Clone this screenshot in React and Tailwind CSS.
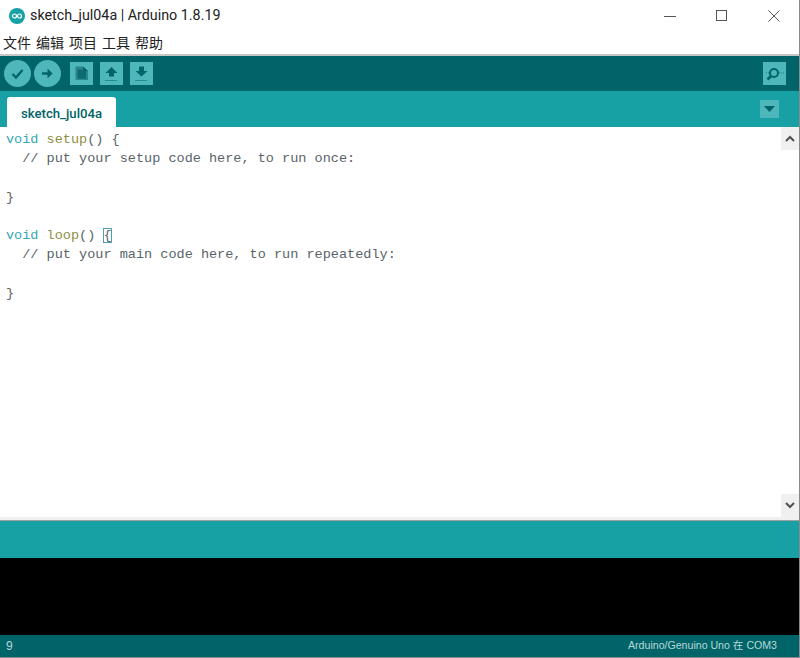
function RoundButton({ children }) {
  return (
    <div className="w-[27px] h-[27px] rounded-full bg-[#4db7bb] flex items-center justify-center">
      <svg width="27" height="27" viewBox="0 0 27 27" fill="none" stroke="#006468">
        {children}
      </svg>
    </div>
  );
}

function SquareButton({ children, className = "" }) {
  return (
    <div className={`w-[23px] h-[23px] bg-[#4db7bb] ${className}`}>
      <svg width="23" height="23" viewBox="0 0 23 23">
        {children}
      </svg>
    </div>
  );
}

export default function App() {
  return (
    <div className="w-[800px] h-[658px] flex flex-col bg-white overflow-hidden border-r border-[#8a8a8a] font-['Liberation_Sans',sans-serif]">
      {/* Title bar */}
      <div className="h-[31px] flex items-center shrink-0">
        <svg className="ml-[9px]" width="16" height="16" viewBox="0 0 16 16" fill="none">
          <circle cx="8" cy="8" r="8" fill="#17a1a5" />
          <circle cx="5.5" cy="8" r="2" stroke="#fff" strokeWidth="1.2" />
          <circle cx="10.5" cy="8" r="2" stroke="#fff" strokeWidth="1.2" />
        </svg>
        <span className="ml-[5px] text-[14.3px] text-[#222] font-['Roboto',sans-serif]">
          sketch_jul04a | Arduino 1.8.19
        </span>
        <div className="ml-auto mr-[19px] flex items-center gap-[40px] text-[#555]">
          <svg width="12" height="12" viewBox="0 0 12 12" stroke="currentColor" strokeWidth="1">
            <path d="M0 6.5 H12" />
          </svg>
          <svg width="11" height="11" viewBox="0 0 11 11" fill="none" stroke="currentColor" strokeWidth="1">
            <rect x="0.5" y="0.5" width="10" height="10" />
          </svg>
          <svg className="ml-[1px]" width="12" height="12" viewBox="0 0 12 12" stroke="currentColor" strokeWidth="1">
            <path d="M0.5 0.5 L11.5 11.5 M11.5 0.5 L0.5 11.5" />
          </svg>
        </div>
      </div>

      {/* Menu bar */}
      <div className="h-[23px] flex items-center gap-[5px] pl-[3px] shrink-0 text-[14px] text-[#222] font-['Noto_Sans_CJK_SC',sans-serif]">
        <span>文件</span>
        <span>编辑</span>
        <span>项目</span>
        <span>工具</span>
        <span>帮助</span>
      </div>

      {/* Toolbar */}
      <div className="h-[37px] shrink-0 border-t-2 border-[#c8c8c8] bg-[#006468] flex items-center">
        <div className="flex items-center gap-[3px] ml-[4px]">
          <RoundButton>
            <path d="M8.5 14 L12 17.5 L18.5 10" strokeWidth="2.4" />
          </RoundButton>
          <RoundButton>
            <path d="M8 13.5 H16" strokeWidth="2.4" />
            <path d="M14 9.5 L18 13.5 L14 17.5 Z" fill="#006468" strokeWidth="1" />
          </RoundButton>
        </div>
        <div className="flex items-center gap-[7px] ml-[9px]">
          <SquareButton>
            <path d="M5.5 4.5 H13 L18 9 V18 H5.5 Z" fill="#2b8589" />
            <path d="M13 4.5 L18 9 H13 Z" fill="#006468" />
            <path d="M7.5 9 H16 M7.5 11 H16 M7.5 13 H16 M7.5 15 H16 M9 7 V17 M11 7 V17 M13 9 V17 M15 9 V17" stroke="#006468" strokeWidth="1" />
          </SquareButton>
          <SquareButton>
            <path d="M11.5 5 L17.5 11 H14 V14.5 H9 V11 H5.5 Z" fill="#006468" />
            <path d="M5.5 18.5 H17.5" stroke="#006468" strokeWidth="1" strokeDasharray="1 1" />
          </SquareButton>
          <SquareButton>
            <path d="M9 4.5 H14 V9 H17.5 L11.5 14.5 L5.5 9 H9 Z" fill="#006468" />
            <path d="M5.5 18.5 H17.5" stroke="#006468" strokeWidth="1" strokeDasharray="1 1" />
          </SquareButton>
        </div>
        <SquareButton className="ml-auto mr-[13px]">
          <circle cx="11" cy="11" r="4" fill="none" stroke="#006468" strokeWidth="2" />
          <path d="M8 14 L4.5 17.5" stroke="#006468" strokeWidth="2.6" />
          <path d="M3 11 H6 M16 11 H21" stroke="#006468" strokeWidth="0.7" strokeDasharray="1 1" />
        </SquareButton>
      </div>

      {/* Tab strip */}
      <div className="h-[36px] shrink-0 bg-[#17a1a5] flex items-end">
        <div className="ml-[7px] w-[109px] h-[30px] pt-[4px] bg-white rounded-t-[3px] flex items-center justify-center text-[13.2px] font-['Roboto',sans-serif] font-medium text-[#006468]">
          sketch_jul04a
        </div>
        <div className="ml-auto mr-[20px] mb-[9px] w-[19px] h-[18px] bg-[#4db7bb] flex items-center justify-center">
          <svg width="11" height="6" viewBox="0 0 11 6">
            <path d="M0 0 H11 L5.5 6 Z" fill="#006468" />
          </svg>
        </div>
      </div>

      {/* Editor */}
      <div className="h-[390px] shrink-0 flex">
        <pre className="flex-1 pt-[3px] pl-[6px] font-['Liberation_Mono',monospace] text-[13.54px] leading-[19.2px] text-[#59646a]">
          <span className="text-[#33a9ad]">void</span> <span className="text-[#8f8f45]">setup</span>() {"{\n"}
          {"  // put your setup code here, to run once:\n\n}\n\n"}
          <span className="text-[#33a9ad]">void</span> <span className="text-[#8f8f45]">loop</span>(){" "}
          <span className="outline outline-1 -outline-offset-1 outline-[#4f9fb0]">{"{"}</span>
          {"\n  // put your main code here, to run repeatedly:\n\n}"}
        </pre>
        <div className="w-[18px] bg-white flex flex-col justify-between">
          <div className="h-[23px] bg-[#f0f0f0] flex items-center justify-center">
            <svg width="10" height="7" viewBox="0 0 10 7" fill="none" stroke="#505050" strokeWidth="2">
              <path d="M1 6 L5 2 L9 6" />
            </svg>
          </div>
          <div className="h-[23px] bg-[#f0f0f0] flex items-center justify-center">
            <svg width="10" height="7" viewBox="0 0 10 7" fill="none" stroke="#505050" strokeWidth="2">
              <path d="M1 1 L5 5 L9 1" />
            </svg>
          </div>
        </div>
      </div>

      {/* Divider and message area */}
      <div className="h-[4px] shrink-0 bg-[#f0f0f0] border-b border-[#a0a0a0]" />
      <div className="h-[37px] shrink-0 bg-[#17a1a5]" />
      <div className="h-[77px] shrink-0 bg-black" />

      {/* Status bar */}
      <div className="h-[22px] shrink-0 bg-[#006468] flex items-center justify-between pl-[6px] pr-[22px] text-[10.6px] text-[#b8d8d8] font-['Liberation_Sans','Noto_Sans_CJK_SC',sans-serif]">
        <span className="text-[12px]">9</span>
        <span>Arduino/Genuino Uno 在 COM3</span>
      </div>
      <div className="h-[1px] shrink-0 bg-[#8a8a8a]" />
    </div>
  );
}
